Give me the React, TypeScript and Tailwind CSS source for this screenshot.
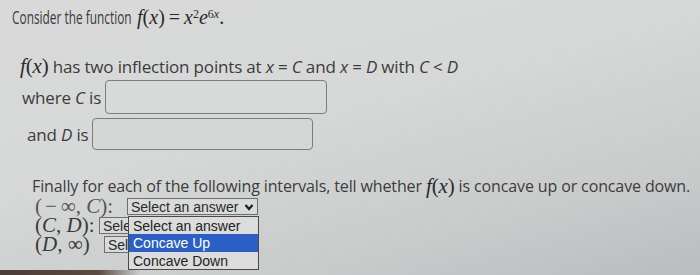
import React from "react";

const serif = "font-['Liberation_Serif','Times_New_Roman',serif]";

function FX() {
  return (
    <span className={`${serif} text-[21px] text-[#2a2a2a]`}>
      <i>f</i>(<i>x</i>)
    </span>
  );
}

function Select({ w, cut }: { w: number; cut?: boolean }) {
  return (
    <div
      className="flex items-center justify-between h-[17px] border border-[#6f6f6f] bg-[#d9dada] pl-[3px] pr-[3px] font-['Liberation_Sans',Arial,sans-serif] text-[14px] leading-none text-[#2b2b2b]"
      style={{ width: w }}
    >
      <span className="whitespace-nowrap">Select an answer</span>
      {!cut && (
        <svg width="10" height="8" viewBox="0 0 10 8">
          <path d="M1.5 2 L5 6 L8.5 2" fill="none" stroke="#1d1d1d" strokeWidth="2.2" />
        </svg>
      )}
    </div>
  );
}

export default function App() {
  return (
    <div className="relative w-[700px] h-[275px] overflow-hidden bg-[#d3d5d5] bg-[linear-gradient(165deg,#d9d9d9_0%,#d7d8d8_40%,#cacccc_75%,#b9bdbd_100%)] font-['Open_Sans',sans-serif] text-[#3c3c3c]">
      <div className="h-[34px] flex items-center pl-[12px] whitespace-nowrap">
        <span className="inline-block w-[125px] text-[18px] leading-none">
          <span className="inline-block origin-left scale-x-[0.66]">Consider the function</span>
        </span>
        <span className={`${serif} text-[20px] leading-none text-[#2a2a2a]`}>
          <i>f</i>(<i>x</i>)<span className="mx-[4px]">=</span>
          <i>x</i>
          <sup className="text-[12px]">2</sup>
          <i>e</i>
          <sup className="text-[12px]">
            6<i>x</i>
          </sup>
          .
        </span>
      </div>

      <div className="mt-[21px] h-[22px] flex items-center pl-[20px] text-[17px] leading-none whitespace-nowrap tracking-[-0.01em]">
        <FX />
        <span>&nbsp;has two inflection points at <i>x</i> = <i>C</i> and <i>x</i> = <i>D</i> with <i>C</i> &lt; <i>D</i></span>
      </div>

      <div className="mt-[3px] h-[34px] flex items-center pl-[22px] text-[17px] leading-none tracking-[-0.01em]">
        <span className="whitespace-nowrap">
          where <i>C</i> is
        </span>
        <div className="ml-[4px] w-[222px] h-[34px] border border-[#7d7d7d] rounded-[4px] bg-[#d8d9d9]" />
      </div>

      <div className="mt-[4px] h-[32px] flex items-center pl-[27px] text-[17px] leading-none tracking-[-0.01em]">
        <span className="whitespace-nowrap">
          and <i>D</i> is
        </span>
        <div className="ml-[3px] w-[221px] h-[32px] border border-[#7d7d7d] rounded-[4px] bg-[#d5d6d6]" />
      </div>

      <div className="mt-[25px] h-[22px] flex items-center pl-[32px] text-[16px] leading-none whitespace-nowrap tracking-[-0.008em]">
        <span>Finally for each of the following intervals, tell whether&nbsp;</span>
        <FX />
        <span>&nbsp;is concave up or concave down.</span>
      </div>

      <div className="mt-[1px] h-[17px] flex items-center pl-[35px]">
        <span className={`${serif} w-[90px] text-[21px] leading-none text-[#555] whitespace-nowrap`}>
          (<span className="ml-[3px] mr-[4px]">−</span>∞, <i>C</i>):
        </span>
        <div className="ml-[2px]">
          <Select w={131} />
        </div>
      </div>

      <div className="mt-[2px] h-[17px] flex items-center pl-[35px]">
        <span className={`${serif} w-[62px] text-[21px] leading-none text-[#3a3a3a] whitespace-nowrap`}>
          (<i>C</i>, <i>D</i>):
        </span>
        <div className="ml-[2px]">
          <Select w={131} />
        </div>
      </div>

      <div className="mt-[2px] h-[17px] flex items-center pl-[35px]">
        <span className={`${serif} w-[64px] text-[21px] leading-none text-[#3a3a3a] whitespace-nowrap`}>
          (<i>D</i>, ∞)
        </span>
        <div className="ml-[5px]">
          <Select w={131} />
        </div>
      </div>

      <div className="absolute left-[128px] top-[216px] w-[131px] border border-[#4a4a4a] bg-[#dcdcdc] font-['Liberation_Sans',Arial,sans-serif] text-[14px] leading-none text-[#222]">
        <div className="h-[17px] flex items-center pl-[4px]">Select an answer</div>
        <div className="h-[18px] flex items-center pl-[4px] bg-[#2b5fc6] text-white">Concave Up</div>
        <div className="h-[17px] flex items-center pl-[4px]">Concave Down</div>
      </div>

      <div className="absolute left-0 bottom-0 w-[140px] h-[5px] bg-[linear-gradient(90deg,#4a3d36,#5a4a40_70%,rgba(90,74,64,0))]" />
    </div>
  );
}
